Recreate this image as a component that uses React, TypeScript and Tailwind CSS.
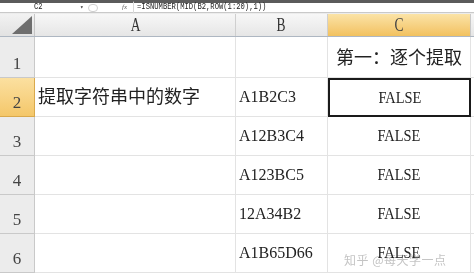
const serif = "font-['Liberation_Serif','Noto_Sans_CJK_SC',serif]";

const rows = [
  { n: "1", a: "", b: "", c: "第一：逐个提取", h: "h-[41px]" },
  { n: "2", a: "提取字符串中的数字", b: "A1B2C3", c: "FALSE", h: "h-[39px]" },
  { n: "3", a: "", b: "A12B3C4", c: "FALSE", h: "h-[39px]" },
  { n: "4", a: "", b: "A123BC5", c: "FALSE", h: "h-[39px]" },
  { n: "5", a: "", b: "12A34B2", c: "FALSE", h: "h-[39px]" },
  { n: "6", a: "", b: "A1B65D66", c: "FALSE", h: "h-[39px]" },
];

export default function App() {
  return (
    <div className={`relative w-[474px] h-[276px] overflow-hidden bg-white ${serif}`}>
      <div className="h-[3px] bg-[#5b5b5b]" />
      {/* formula bar */}
      <div className="h-[10px] flex items-center bg-white border-b border-[#c9c9c9] text-[#222] font-['Liberation_Mono',monospace] text-[7.2px]">
        <div className="w-[80px] pl-[34px] scale-y-130">C2</div>
        <div className="w-[6px] text-[6px] leading-none text-[#333]">▾</div>
        <div className="w-[10px] h-[8px] rounded-full border border-[#d0d0d0] ml-[2px]" />
        <div className="w-[35px] text-right pr-[6px] italic text-[#666] text-[7px] font-['Liberation_Serif',serif]">fx</div>
        <div className="h-full border-l border-[#d8d8d8] pl-[3px] flex items-center scale-y-130 origin-left">=ISNUMBER(MID(B2,ROW(1:20),1))</div>
      </div>
      <div className="h-[1px] bg-[#ececec]" />
      {/* column headers */}
      <div className="flex h-[23px] border-b border-[#aeb7c2]">
        <div className="w-[35px] bg-gradient-to-b from-[#f2f2f2] to-[#e2e2e2] border-r border-[#c6c6c6] relative">
          <svg width="20" height="18" className="absolute right-[2px] bottom-[2px]">
            <polygon points="20,0 20,18 0,18" fill="#6e6e6e" />
          </svg>
        </div>
        <div className="w-[201px] bg-gradient-to-b from-[#f7f7f7] to-[#e6e6e6] border-r border-[#cfcfcf] flex items-center justify-center text-[18px] text-[#333]"><span className="scale-x-75 inline-block">A</span></div>
        <div className="w-[92px] bg-gradient-to-b from-[#f7f7f7] to-[#e6e6e6] border-r border-[#cfcfcf] flex items-center justify-center text-[18px] text-[#333]"><span className="scale-x-75 inline-block">B</span></div>
        <div className="w-[143px] bg-gradient-to-b from-[#fbe3a6] to-[#f2c15e] border-r border-[#c9c9c9] flex items-center justify-center text-[18px] text-[#444]"><span className="scale-x-75 inline-block">C</span></div>
        <div className="flex-1 bg-gradient-to-b from-[#f7f7f7] to-[#e6e6e6]" />
      </div>
      {/* body */}
      {rows.map((r) => (
        <div key={r.n} className={`flex ${r.h}`}>
          <div
            className={`w-[35px] shrink-0 border-r border-b flex items-end justify-center pb-[1px] text-[17px] text-[#444] ${
              r.n === "2" ? "bg-gradient-to-b from-[#fbe0a0] to-[#f4c769] border-[#d9a94c]" : "bg-[#ececec] border-[#c9c9c9]"
            }`}
          >
            {r.n}
          </div>
          <div className="w-[201px] shrink-0 border-r border-b border-[#e3e3e3] flex items-center pl-[3px] text-[18px] text-[#222]">
            {r.a}
          </div>
          <div className="w-[92px] shrink-0 border-r border-b border-[#e3e3e3] flex items-center pl-[3px] text-[16px] text-[#222]">
            {r.b}
          </div>
          <div
            className={`w-[143px] shrink-0 flex items-center justify-center text-[#222] ${
              r.n === "1" ? "text-[18px] border-r border-b border-[#e3e3e3]" : "text-[16px]"
            } ${r.n === "2" ? "border-2 border-[#1a1a1a]" : r.n !== "1" ? "border-r border-b border-[#e3e3e3]" : ""}`}
          >
            <span className={r.n === "1" ? "pt-[2px]" : "scale-x-90 inline-block"}>{r.c}</span>
          </div>
          <div className="flex-1 border-b border-[#e3e3e3]" />
        </div>
      ))}
      <div className="absolute left-[344px] top-[251px] text-[12px] text-[#c4c4c4] font-['Noto_Sans_CJK_SC',sans-serif] tracking-[0.5px] mix-blend-multiply">
        知乎 @每天学一点
      </div>
    </div>
  );
}
